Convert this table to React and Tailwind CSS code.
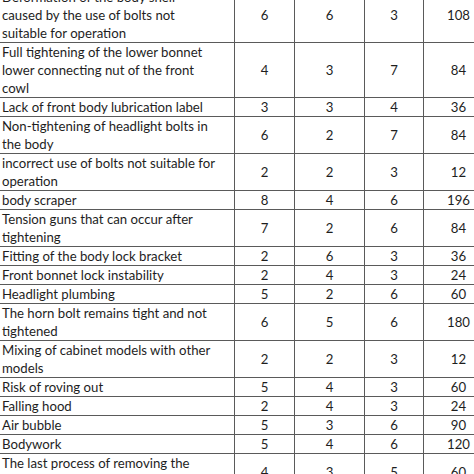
const rows = [
  [['Deformation of the body shell', 'caused by the use of bolts not', 'suitable for operation'], 6, 6, 3, 108],
  [['Full tightening of the lower bonnet', 'lower connecting nut of the front', 'cowl'], 4, 3, 7, 84],
  [['Lack of front body lubrication label'], 3, 3, 4, 36],
  [['Non-tightening of headlight bolts in', 'the body'], 6, 2, 7, 84],
  [['incorrect use of bolts not suitable for', 'operation'], 2, 2, 3, 12],
  [['body scraper'], 8, 4, 6, 196],
  [['Tension guns that can occur after', 'tightening'], 7, 2, 6, 84],
  [['Fitting of the body lock bracket'], 2, 6, 3, 36],
  [['Front bonnet lock instability'], 2, 4, 3, 24],
  [['Headlight plumbing'], 5, 2, 6, 60],
  [['The horn bolt remains tight and not', 'tightened'], 6, 5, 6, 180],
  [['Mixing of cabinet models with other', 'models'], 2, 2, 3, 12],
  [['Risk of roving out'], 5, 4, 3, 60],
  [['Falling hood'], 2, 4, 3, 24],
  [['Air bubble'], 5, 3, 6, 90],
  [['Bodywork'], 5, 4, 6, 120],
  [['The last process of removing the', 'body from the line'], 4, 3, 5, 60],
];

export default function App() {
  return (
    <div className="w-[474px] h-[474px] overflow-hidden bg-white">
      <table
        className="w-[496px] min-w-[496px] -mt-[13px] -ml-[3px] table-fixed border-collapse text-[#1e1e1e] text-[13.2px] leading-[18px]"
        style={{ fontFamily: 'Lato, "Open Sans", sans-serif' }}
      >
        <colgroup>
          <col className="w-[237px]" />
          <col className="w-[60px]" />
          <col className="w-[70px]" />
          <col className="w-[59px]" />
          <col className="w-[70px]" />
        </colgroup>
        <tbody>
          {rows.map(([lines, a, b, c, r], i) => (
            <tr key={i}>
              <td className="border border-[#5a5a5a] pl-[4px] pr-0 py-0 align-middle whitespace-nowrap">
                {lines.map((l, j) => (
                  <div key={j}>{l}</div>
                ))}
              </td>
              <td className="border border-[#5a5a5a] p-0 text-center align-middle">{a}</td>
              <td className="border border-[#5a5a5a] p-0 text-center align-middle">{b}</td>
              <td className="border border-[#5a5a5a] p-0 text-center align-middle">{c}</td>
              <td className="border border-[#5a5a5a] p-0 text-center align-middle">{r}</td>
            </tr>
          ))}
        </tbody>
      </table>
    </div>
  );
}
